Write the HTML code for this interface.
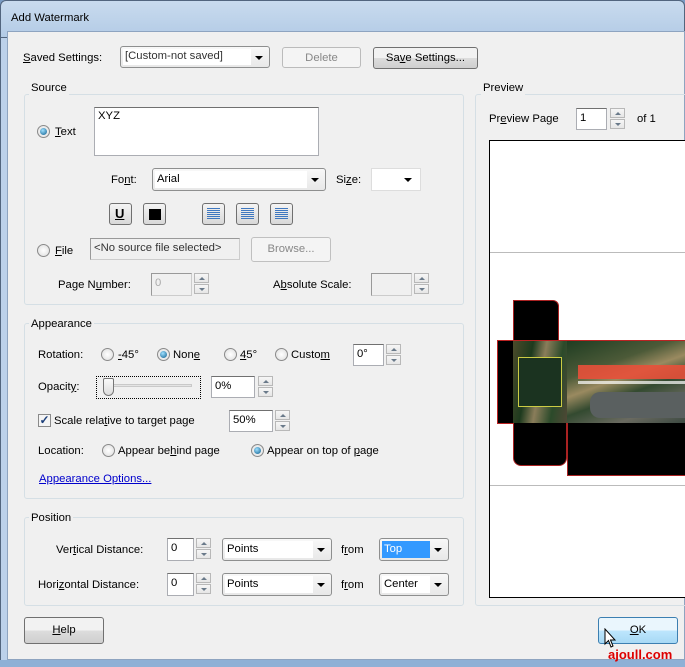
<!DOCTYPE html>
<html><head><meta charset="utf-8"><style>
*{box-sizing:border-box;margin:0;padding:0}
body{width:685px;height:667px;overflow:hidden;background:#7a9cc4;font-family:"Liberation Sans",sans-serif;font-size:11.3px;color:#000;position:relative}
.a{position:absolute}
.t{position:absolute;white-space:nowrap;line-height:14px}
.title{left:0;top:0;width:685px;height:38px;background:linear-gradient(#c9dbee,#b3cbe6);border-radius:6px 6px 0 0;border:1px solid #52657e}
.frame{left:0;top:31px;width:685px;height:636px;background:#bcd1ea;border-left:1px solid #52657e}
.body{left:7px;top:31px;width:678px;height:629px;background:#f0f0f0;border:1px solid #8ea4c0}
.grp{position:absolute;border:1px solid #d5dfe5;border-radius:3px}
.glab{position:absolute;background:#f0f0f0;padding:0 2px;line-height:14px}
.fld{position:absolute;background:#fff;border:1px solid #abadb3;border-top-color:#707070;line-height:18px;padding-left:3px}
.dis{background:#f0f0f0;color:#888;border-color:#c8c8c8}
.cmb{position:absolute;background:linear-gradient(#f8f8f8,#e8e8e8);border:1px solid #8e8f8f;border-radius:3px;line-height:19px;padding-left:4px}
.cmb .in{position:absolute;left:2px;top:2px;bottom:2px;right:18px;background:#fff}
.cmb span{position:relative}
.cmb:after{content:"";position:absolute;right:6px;top:9px;border:4px solid transparent;border-top:4px solid #000;border-bottom:0}
.btn{position:absolute;border:1px solid #707070;border-radius:3px;background:linear-gradient(#f2f2f2 50%,#dddddd 50%,#cfcfcf);text-align:center;line-height:20px}
.spin{position:absolute;width:15px}
.spin i{display:block;height:10px;border:1px solid #b8b8b8;background:linear-gradient(#f6f6f6,#e6e6e6);margin-bottom:1px;position:relative}
.spin i:after{content:"";position:absolute;left:4px;top:3px;border:3px solid transparent}
.spin i.u:after{border-bottom:3px solid #6a7a8a;border-top:0}
.spin i.d:after{border-top:3px solid #6a7a8a;border-bottom:0}
.rad{position:absolute;width:13px;height:13px;border-radius:50%;border:1px solid #8a8a8a;background:radial-gradient(#fff,#dcdcdc)}
.rad.on:after{content:"";position:absolute;left:2px;top:2px;width:7px;height:7px;border-radius:50%;background:radial-gradient(circle at 40% 35%,#9fe0ff,#0b5c8c)}
u{text-decoration:underline}
.sq{position:absolute;width:23px;height:22px;border:1px solid #707070;border-radius:3px;background:linear-gradient(#f4f4f4,#d8d8d8)}
</style></head><body>
<div class="a frame"></div>
<div class="a title"></div>
<div class="t" style="left:11px;top:11px">Add Watermark</div>
<div class="a body"></div>

<div class="t" style="left:23px;top:51px"><u>S</u>aved Settings:</div>
<div class="cmb" style="left:120px;top:46px;width:150px;height:22px"><div class="in"></div><span style="color:#333">[Custom-not saved]</span></div>
<div class="btn" style="left:282px;top:47px;width:79px;height:21px;color:#888;border-color:#bbb;background:#f4f4f4">Delete</div>
<div class="btn" style="left:373px;top:47px;width:105px;height:22px">Sa<u>v</u>e Settings...</div>

<!-- Source -->
<div class="grp" style="left:24px;top:94px;width:440px;height:211px"></div>
<div class="glab" style="left:29px;top:81px">Source</div>
<div class="rad on" style="left:37px;top:125px"></div>
<div class="t" style="left:55px;top:125px"><u>T</u>ext</div>
<div class="fld" style="left:94px;top:107px;width:225px;height:49px;line-height:16px">XYZ</div>
<div class="t" style="left:111px;top:173px">Fo<u>n</u>t:</div>
<div class="cmb" style="left:152px;top:168px;width:174px;height:23px;line-height:20px"><div class="in"></div><span>Arial</span></div>
<div class="t" style="left:336px;top:173px">Si<u>z</u>e:</div>
<div class="fld" style="left:371px;top:168px;width:50px;height:23px;border-color:#ddd"></div>
<div class="a" style="left:404px;top:178px;border:4px solid transparent;border-top:4px solid #000;border-bottom:0"></div>
<div class="sq" style="left:109px;top:203px"><div class="t" style="left:5px;top:3px;font-weight:bold;font-size:13px"><u>U</u></div></div>
<div class="sq" style="left:143px;top:203px"><div class="a" style="left:5px;top:5px;width:12px;height:11px;background:#000"></div></div>
<div class="sq" style="left:202px;top:203px"><div class="a" style="left:4px;top:4px;width:13px;height:12px;background:repeating-linear-gradient(#3f78c0 0 1px,transparent 1px 2px)"></div></div>
<div class="sq" style="left:236px;top:203px"><div class="a" style="left:4px;top:4px;width:13px;height:12px;background:repeating-linear-gradient(#3f78c0 0 1px,transparent 1px 2px)"></div></div>
<div class="sq" style="left:270px;top:203px"><div class="a" style="left:4px;top:4px;width:13px;height:12px;background:repeating-linear-gradient(#3f78c0 0 1px,transparent 1px 2px)"></div></div>
<div class="rad" style="left:37px;top:244px"></div>
<div class="t" style="left:55px;top:244px"><u>F</u>ile</div>
<div class="fld dis" style="left:90px;top:238px;width:150px;height:22px;color:#333;border-color:#999 #ccc #ccc #999">&lt;No source file selected&gt;</div>
<div class="btn" style="left:251px;top:237px;width:80px;height:25px;line-height:23px;color:#888;border-color:#c0c0c0;background:#f4f4f4">Browse...</div>
<div class="t" style="left:58px;top:278px">Page N<u>u</u>mber:</div>
<div class="fld dis" style="left:151px;top:273px;width:41px;height:23px;color:#aaa;border-color:#999 #ccc #ccc #999">0</div>
<div class="spin" style="left:194px;top:273px"><i class="u"></i><i class="d"></i></div>
<div class="t" style="left:273px;top:278px">A<u>b</u>solute Scale:</div>
<div class="fld dis" style="left:371px;top:273px;width:41px;height:23px;border-color:#999 #ccc #ccc #999"></div>
<div class="spin" style="left:414px;top:273px"><i class="u"></i><i class="d"></i></div>

<!-- Appearance -->
<div class="grp" style="left:24px;top:323px;width:440px;height:176px"></div>
<div class="glab" style="left:29px;top:317px">Appearance</div>
<div class="t" style="left:38px;top:348px">Rotation:</div>
<div class="rad" style="left:101px;top:348px"></div><div class="t" style="left:118px;top:348px"><u>-</u>45°</div>
<div class="rad on" style="left:157px;top:348px"></div><div class="t" style="left:173px;top:348px">Non<u>e</u></div>
<div class="rad" style="left:224px;top:348px"></div><div class="t" style="left:240px;top:348px"><u>4</u>5°</div>
<div class="rad" style="left:275px;top:348px"></div><div class="t" style="left:291px;top:348px">Custo<u>m</u></div>
<div class="fld" style="left:353px;top:344px;width:31px;height:22px">0°</div>
<div class="spin" style="left:386px;top:344px"><i class="u"></i><i class="d"></i></div>
<div class="t" style="left:38px;top:380px">Opacit<u>y</u>:</div>
<div class="a" style="left:96px;top:376px;width:105px;height:23px;border:1px dotted #000"></div>
<div class="a" style="left:110px;top:384px;width:82px;height:3px;background:#e4e4e4;border:1px solid #c9c9c9"></div>
<div class="a" style="left:103px;top:378px;width:11px;height:18px;background:linear-gradient(#fafafa,#dcdcdc);border:1px solid #777;border-radius:2px 2px 6px 6px"></div>
<div class="fld" style="left:211px;top:376px;width:44px;height:22px">0%</div>
<div class="spin" style="left:258px;top:376px"><i class="u"></i><i class="d"></i></div>
<div class="a" style="left:38px;top:414px;width:13px;height:13px;border:1px solid #8a8a8a;background:#f4f4f4;color:#1c3f7a;font-size:12px;line-height:11px;text-align:center;font-weight:bold">✓</div>
<div class="t" style="left:54px;top:414px">Scale rela<u>t</u>ive to target page</div>
<div class="fld" style="left:229px;top:410px;width:44px;height:22px">50%</div>
<div class="spin" style="left:275px;top:410px"><i class="u"></i><i class="d"></i></div>
<div class="t" style="left:38px;top:444px">Location:</div>
<div class="rad" style="left:102px;top:444px"></div><div class="t" style="left:118px;top:444px">Appear be<u>h</u>ind page</div>
<div class="rad on" style="left:251px;top:444px"></div><div class="t" style="left:267px;top:444px">Appear on top of <u>p</u>age</div>
<div class="t" style="left:39px;top:472px;color:#0000cc;text-decoration:underline">Appearance Options...</div>

<!-- Position -->
<div class="grp" style="left:24px;top:517px;width:440px;height:89px"></div>
<div class="glab" style="left:29px;top:511px">Position</div>
<div class="t" style="left:56px;top:543px">Ver<u>t</u>ical Distance:</div>
<div class="fld" style="left:167px;top:538px;width:27px;height:23px">0</div>
<div class="spin" style="left:196px;top:538px"><i class="u"></i><i class="d"></i></div>
<div class="cmb" style="left:222px;top:538px;width:110px;height:23px;line-height:20px"><div class="in"></div><span>Points</span></div>
<div class="t" style="left:341px;top:543px">f<u>r</u>om</div>
<div class="cmb" style="left:379px;top:538px;width:70px;height:23px;line-height:20px"><div class="in" style="background:#3399ff"></div><span style="color:#fff">Top</span></div>
<div class="t" style="left:38px;top:578px">Hori<u>z</u>ontal Distance:</div>
<div class="fld" style="left:167px;top:573px;width:27px;height:23px">0</div>
<div class="spin" style="left:196px;top:573px"><i class="u"></i><i class="d"></i></div>
<div class="cmb" style="left:222px;top:573px;width:110px;height:23px;line-height:20px"><div class="in"></div><span>Points</span></div>
<div class="t" style="left:341px;top:578px">f<u>r</u>om</div>
<div class="cmb" style="left:379px;top:573px;width:70px;height:23px;line-height:20px"><div class="in"></div><span>Center</span></div>

<!-- Preview -->
<div class="grp" style="left:475px;top:94px;width:215px;height:512px"></div>
<div class="glab" style="left:481px;top:81px">Preview</div>
<div class="t" style="left:489px;top:112px">Pr<u>e</u>view Page</div>
<div class="fld" style="left:576px;top:108px;width:31px;height:22px">1</div>
<div class="spin" style="left:610px;top:108px"><i class="u"></i><i class="d"></i></div>
<div class="t" style="left:637px;top:112px">of 1</div>
<div class="a" style="left:489px;top:140px;width:200px;height:458px;background:#fff;border:1px solid #000"></div>
<div class="a" style="left:490px;top:252px;width:196px;height:1px;background:#bbb"></div>
<div class="a" style="left:490px;top:485px;width:196px;height:1px;background:#bbb"></div>
<!-- box art -->
<div class="a" style="left:513px;top:300px;width:46px;height:42px;background:#000;border:1px solid #a22;border-radius:0 6px 0 0"></div>
<div class="a" style="left:497px;top:340px;width:190px;height:84px;background:#000;border:1px solid #b22"></div>
<div class="a" style="left:513px;top:341px;width:54px;height:82px;background:linear-gradient(100deg,#4b4a2a,#1e3a1e 30%,#8a7d5a 50%,#2b4a2a 75%,#4f4835)"></div>
<div class="a" style="left:518px;top:357px;width:44px;height:50px;border:1px solid #cc4;background:#1b3320"></div>
<div class="a" style="left:567px;top:341px;width:120px;height:82px;background:linear-gradient(160deg,#1f3d22,#4c5a38 30%,#9a8a60 45%,#334a30 60%,#6a6a60 80%,#3a4840)"></div>
<div class="a" style="left:578px;top:365px;width:107px;height:14px;background:#e8503a;opacity:.9"></div>
<div class="a" style="left:578px;top:381px;width:107px;height:3px;background:#fff;opacity:.7"></div>
<div class="a" style="left:590px;top:392px;width:95px;height:26px;background:#5a6060;border-radius:10px 0 0 10px"></div>
<div class="a" style="left:513px;top:423px;width:54px;height:43px;background:#000;border:1px solid #a22;border-top:0;border-radius:0 0 8px 8px"></div>
<div class="a" style="left:567px;top:423px;width:120px;height:53px;background:#000;border:1px solid #a22;border-top:0"></div>

<!-- bottom buttons -->
<div class="btn" style="left:24px;top:617px;width:80px;height:27px;line-height:25px"><u>H</u>elp</div>
<div class="btn" style="left:598px;top:617px;width:80px;height:27px;line-height:25px;border-color:#3c7fb1;background:linear-gradient(#eaf6fd 50%,#bee6fd 50%,#a7d9f5)"><u>O</u>K</div>
<svg class="a" style="left:604px;top:628px" width="14" height="22" viewBox="0 0 14 22"><path d="M1 1 L1 16 L4.5 12.5 L7 19 L9 18 L6.5 12 L11 12 Z" fill="#fff" stroke="#000" stroke-width="1"/></svg>
<div class="a" style="left:0;top:660px;width:685px;height:7px;background:#8fb0d6"></div>
<div class="t" style="left:608px;top:648px;color:#d00;font-weight:bold;font-size:13px">ajoull.com</div>
</body></html>
